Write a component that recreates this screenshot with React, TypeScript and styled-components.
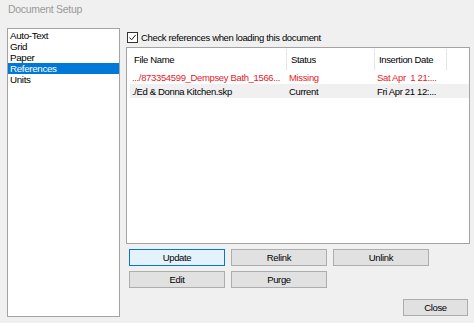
import React from "react";
import styled, { createGlobalStyle } from "styled-components";

const Global = createGlobalStyle`
  html, body { margin: 0; padding: 0; background: #f0f0f0; }
  body { font-family: "Liberation Sans", Arial, sans-serif; font-size: 9.5px; letter-spacing: -0.35px; color: #000; }
  #root { width: 474px; height: 323px; overflow: hidden; }
`;

const Window = styled.div`
  width: 474px;
  height: 323px;
  display: flex;
  flex-direction: column;
  background: #f0f0f0;
`;

const TitleBar = styled.div`
  height: 20px;
  display: flex;
  align-items: center;
  padding-left: 8px;
  font-size: 10.5px;
  letter-spacing: -0.3px;
  color: #9a9a9a;
  box-sizing: border-box;
  padding-bottom: 2px;
`;

const Body = styled.div`
  display: flex;
  padding: 8px 0 0 7px;
  gap: 6px;
`;

const SideList = styled.ul`
  list-style: none;
  margin: 0;
  padding: 1px 0 0 0;
  width: 113px;
  height: 289px;
  box-sizing: border-box;
  background: #fff;
  border: 1px solid #a3a3a3;
`;

const SideItem = styled.li<{ $selected?: boolean }>`
  height: 11px;
  line-height: 11px;
  padding-left: 2px;
  font-size: 9.8px;
  background: ${(p) => (p.$selected ? "#0078d7" : "transparent")};
  color: ${(p) => (p.$selected ? "#fff" : "#000")};
`;

const Main = styled.div`
  width: 344px;
  display: flex;
  flex-direction: column;
`;

const CheckRow = styled.label`
  display: flex;
  align-items: center;
  gap: 3px;
  margin-left: 1px;
  margin-top: 4px;
  height: 11px;
`;

const CheckBox = styled.span`
  width: 9px;
  height: 9px;
  border: 1px solid #333;
  background: #fff;
  display: flex;
  align-items: center;
  justify-content: center;
`;

const Table = styled.div`
  margin-top: 4px;
  height: 197px;
  box-sizing: border-box;
  background: #fff;
  border: 1px solid #a3a3a3;
  padding: 0 0 0 3px;
`;

const Row = styled.div<{ $header?: boolean; $bg?: string; $color?: string }>`
  display: grid;
  grid-template-columns: 157px 88px 72px;
  height: ${(p) => (p.$header ? "21px" : "14px")};
  margin-top: ${(p) => (p.$header ? "1px" : "0")};
  align-items: center;
  background: ${(p) => p.$bg || "transparent"};
  color: ${(p) => p.$color || "#000"};
`;

const HeadCell = styled.div`
  height: 100%;
  display: flex;
  align-items: center;
  padding-left: 4px;
  border-right: 1px solid #e5e5e5;
  box-sizing: border-box;
`;

const Cell = styled.div`
  padding-left: 2px;
  white-space: nowrap;
  overflow: hidden;
`;

const ButtonGrid = styled.div`
  display: grid;
  grid-template-columns: repeat(3, 96px);
  column-gap: 6px;
  row-gap: 5px;
  margin: 5px 0 0 3px;
`;

const Button = styled.button<{ $focused?: boolean }>`
  height: 17px;
  width: 100%;
  box-sizing: border-box;
  padding: 0;
  font-family: "Liberation Sans", Arial, sans-serif;
  font-size: 9.5px;
  letter-spacing: -0.35px;
  color: #000;
  background: ${(p) => (p.$focused ? "#e5f1fb" : "#e1e1e1")};
  border: 1px solid ${(p) => (p.$focused ? "#0078d7" : "#adadad")};
`;

const Footer = styled.div`
  display: flex;
  justify-content: flex-end;
  margin-top: 11px;
  padding-right: 2px;
`;

const CloseButton = styled(Button)`
  width: 65px;
`;

export default function App() {
  return (
    <Window>
      <Global />
      <TitleBar>Document Setup</TitleBar>
      <Body>
        <SideList>
          <SideItem>Auto-Text</SideItem>
          <SideItem>Grid</SideItem>
          <SideItem>Paper</SideItem>
          <SideItem $selected>References</SideItem>
          <SideItem>Units</SideItem>
        </SideList>
        <Main>
          <CheckRow>
            <CheckBox>
              <svg width="9" height="9" viewBox="0 0 9 9">
                <path d="M1.5 4.5 L3.6 6.8 L7.8 1.8" fill="none" stroke="#222" strokeWidth="1" />
              </svg>
            </CheckBox>
            Check references when loading this document
          </CheckRow>
          <Table>
            <Row $header>
              <HeadCell>File Name</HeadCell>
              <HeadCell>Status</HeadCell>
              <HeadCell>Insertion Date</HeadCell>
            </Row>
            <Row $color="#e8202a">
              <Cell>.../873354599_Dempsey Bath_1566...</Cell>
              <Cell>Missing</Cell>
              <Cell>Sat Apr &nbsp;1 21:...</Cell>
            </Row>
            <Row $bg="#f0f0f0">
              <Cell>./Ed &amp; Donna Kitchen.skp</Cell>
              <Cell>Current</Cell>
              <Cell>Fri Apr 21 12:...</Cell>
            </Row>
          </Table>
          <ButtonGrid>
            <Button $focused>Update</Button>
            <Button>Relink</Button>
            <Button>Unlink</Button>
            <Button>Edit</Button>
            <Button>Purge</Button>
          </ButtonGrid>
          <Footer>
            <CloseButton>Close</CloseButton>
          </Footer>
        </Main>
      </Body>
    </Window>
  );
}
